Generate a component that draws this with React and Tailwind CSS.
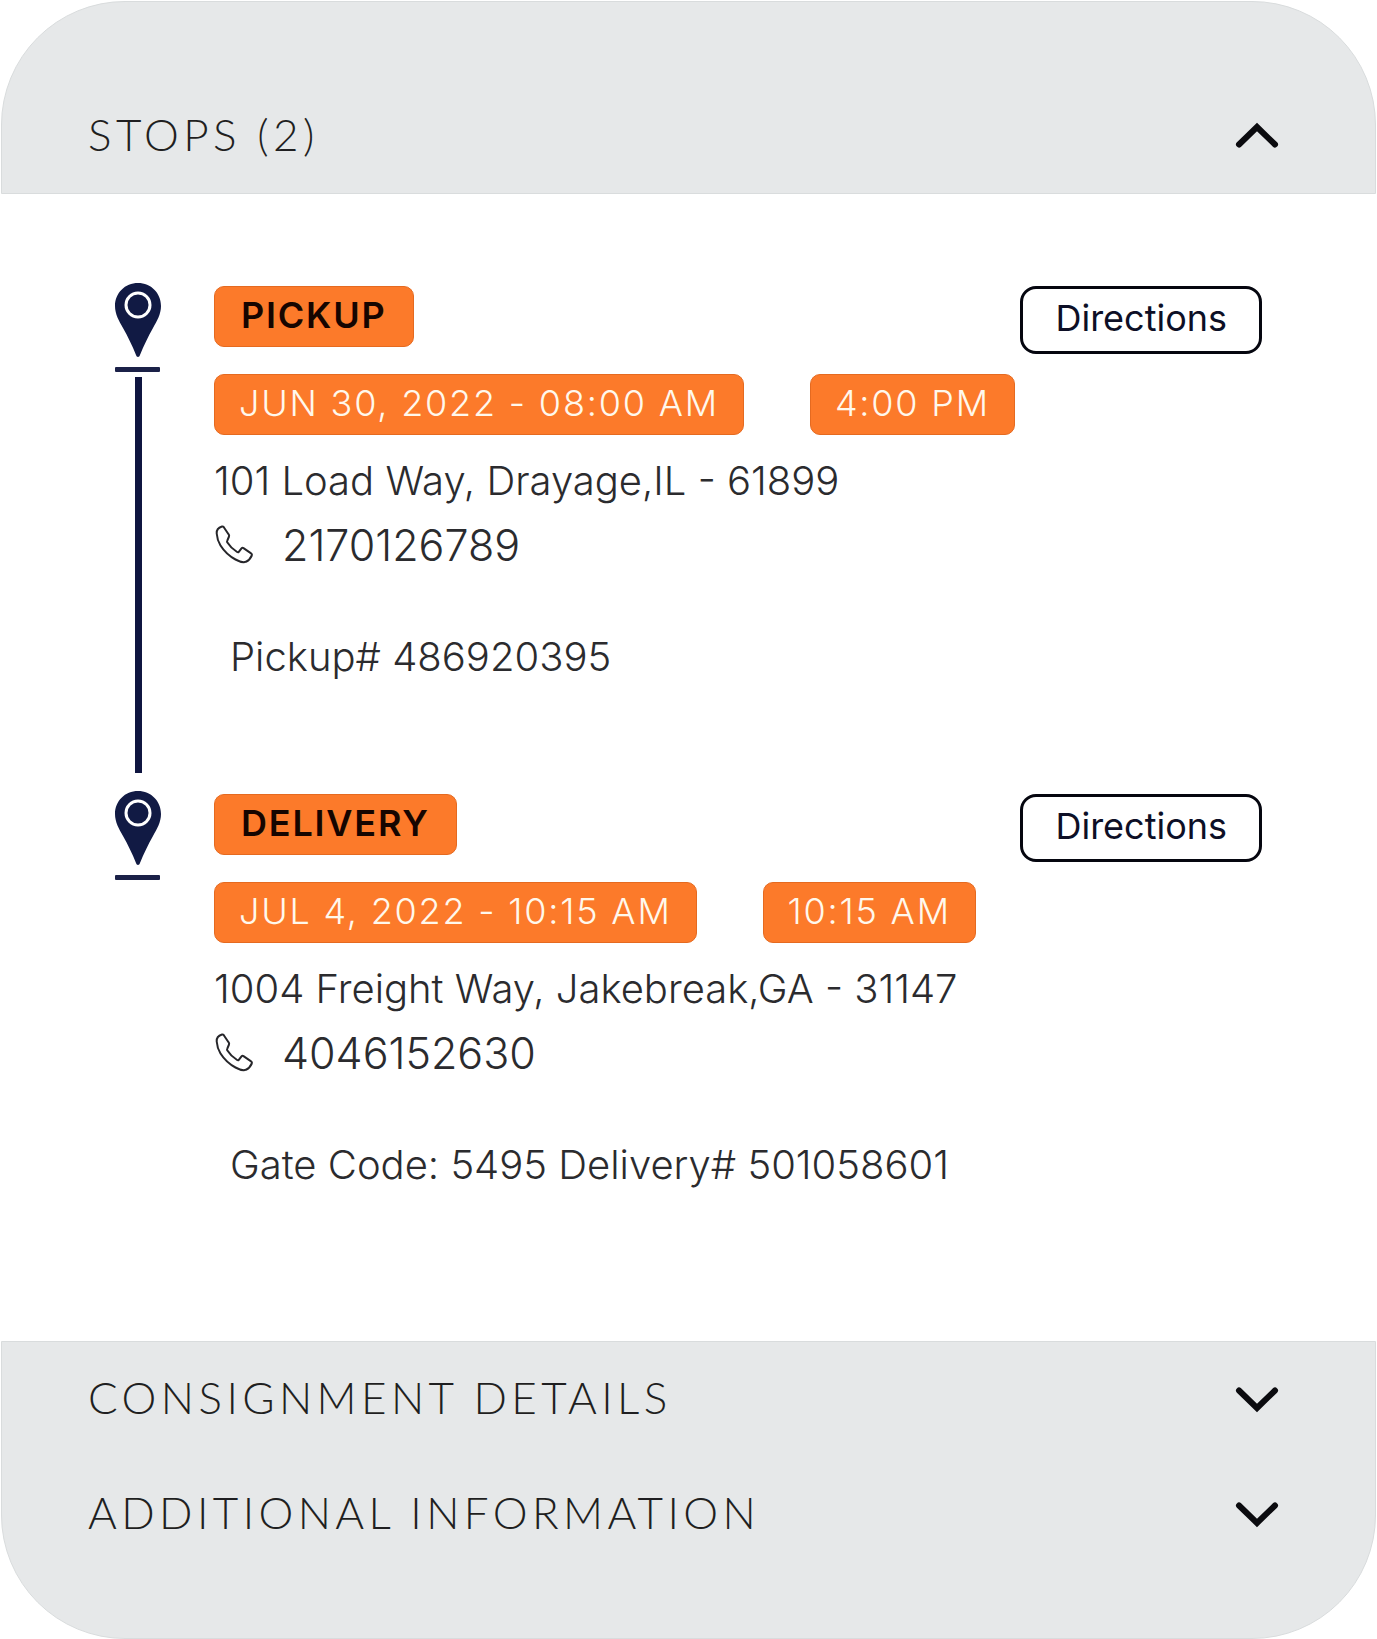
import { useState } from "react";

const stops = [
  {
    type: "PICKUP",
    date: "JUN 30, 2022 - 08:00 AM",
    time: "4:00 PM",
    address: "101 Load Way, Drayage,IL - 61899",
    phone: "2170126789",
    note: "Pickup# 486920395",
  },
  {
    type: "DELIVERY",
    date: "JUL 4, 2022 - 10:15 AM",
    time: "10:15 AM",
    address: "1004 Freight Way, Jakebreak,GA - 31147",
    phone: "4046152630",
    note: "Gate Code: 5495 Delivery# 501058601",
  },
];

function Chevron({ open }) {
  return (
    <svg
      className={open ? "mt-1 h-7 w-11 shrink-0" : "mt-1 h-7 w-11 shrink-0 rotate-180"}
      viewBox="0 0 44 28"
      fill="none"
      stroke="#0b0b0f"
      strokeWidth="6"
      strokeLinecap="round"
      aria-hidden="true"
    >
      <path d="M4 22.500 22 5 40 22.500" />
    </svg>
  );
}

function PinIcon() {
  return (
    <svg className="h-[89px] w-[46px] shrink-0" viewBox="0 0 46 89" aria-hidden="true">
      <path
        d="M23 0C10 0 0 10 0 23c0 8 4 15 8 22 5 9 9 17 13 27 .6 2.500 3.400 2.500 4 0 4-10 8-18 13-27 4-7 8-14 8-22C46 10 36 0 23 0Z"
        fill="#111a44"
      />
      <circle cx="23" cy="22" r="12" fill="none" stroke="#fff" strokeWidth="3" />
      <rect x="0" y="84" width="45" height="5" rx="1" fill="#1b2148" />
    </svg>
  );
}

function PhoneIcon() {
  return (
    <svg
      className="h-10 w-10 shrink-0"
      viewBox="0 0 40 40"
      fill="none"
      stroke="#26262a"
      strokeWidth="2"
      strokeLinejoin="round"
      aria-hidden="true"
    >
      <path d="M8 1.500C4.500 2.500 2.400 5 2.700 8.500 3 12.500 4 16.500 6.500 20.500 10 26 15 31 21.500 34.500c4.500 2.400 8 3.300 10.500 2.200 2.500-1 4.600-3.500 5.800-6.200.4-1 .1-1.700-.7-2.200l-7.600-5.200c-.8-.5-1.400-.4-2 .3L24.800 26.800c-.5.6-1.100.6-1.700.2C19 24.500 15.500 21 13.200 17.300c-.3-.6-.2-1.100.1-1.600l1.700-4.200c.3-.8.2-1.400-.3-2L9.800 2.200C9.300 1.500 8.800 1.300 8 1.500Z" />
    </svg>
  );
}

function Tag({ children, strong }) {
  return (
    <span
      className={
        strong
          ? "rounded-[10px] border border-[#e56a20] bg-[#fc7a2a] px-[26px] pb-0.5 text-4xl leading-[57px] font-semibold tracking-wider text-[#160500]"
          : "rounded-[10px] border border-[#e56a20] bg-[#fc7a2a] px-6 pb-0.5 text-4xl leading-[57px] font-light tracking-wider text-[#fff8ec]"
      }
    >
      {children}
    </span>
  );
}

function Stop({ stop, last }) {
  return (
    <li className="flex min-h-[508px]">
      <div className="flex shrink-0 flex-col items-center pb-[18px]">
        <PinIcon />
        {!last && <div className="mt-[5px] w-[7px] flex-1 bg-[#0f1540]" />}
      </div>
      <div className="ml-[53px] flex min-w-0 flex-1 flex-col items-start pt-[3px] text-[40px] leading-[64px] font-light whitespace-nowrap text-[#2b2b2e]">
        <Tag strong>{stop.type}</Tag>
        <div className="mt-[27px] flex gap-[66px]">
          <Tag>{stop.date}</Tag>
          <Tag>{stop.time}</Tag>
        </div>
        <p className="mt-[14px]">{stop.address}</p>
        <p className="flex items-center gap-7 text-[43px]">
          <PhoneIcon />
          {stop.phone}
        </p>
        <p className="mt-12 pl-4">{stop.note}</p>
      </div>
      <button
        type="button"
        className="mt-[3px] h-[68px] shrink-0 cursor-pointer rounded-2xl border-3 border-[#05060f] bg-white px-8 pb-1 text-4xl font-normal text-[#0d0f26]"
      >
        Directions
      </button>
    </li>
  );
}

function SectionButton({ title, open, onClick }) {
  return (
    <button
      type="button"
      aria-expanded={open}
      onClick={onClick}
      className="flex w-full cursor-pointer items-center justify-between pr-24 pl-[86px] text-left font-['Lato'] text-[44px] leading-[60px] font-light tracking-widest text-[#1f1f21]"
    >
      {title}
      <Chevron open={open} />
    </button>
  );
}

export default function App() {
  const [open, setOpen] = useState("stops");
  const toggle = (name) => setOpen(open === name ? "" : name);

  return (
    <main className="bg-white font-['Inter',sans-serif]">
      <header className="mx-px mt-px rounded-t-[124px] border border-[#d9dcdd] bg-[#e6e8e9] pt-[102px] pb-[29px]">
        <SectionButton
          title={`STOPS (${stops.length})`}
          open={open === "stops"}
          onClick={() => toggle("stops")}
        />
      </header>
      {open === "stops" && (
        <ul className="pt-[89px] pr-[115px] pb-[42px] pl-[115px]">
          {stops.map((stop, i) => (
            <Stop key={stop.type} stop={stop} last={i === stops.length - 1} />
          ))}
        </ul>
      )}
      <footer className="mx-px flex flex-col gap-[55px] rounded-b-[124px] border border-[#d9dcdd] bg-[#e6e8e9] pt-[25px] pb-24">
        <SectionButton
          title="CONSIGNMENT DETAILS"
          open={open === "consignment"}
          onClick={() => toggle("consignment")}
        />
        <SectionButton
          title="ADDITIONAL INFORMATION"
          open={open === "additional"}
          onClick={() => toggle("additional")}
        />
      </footer>
    </main>
  );
}
